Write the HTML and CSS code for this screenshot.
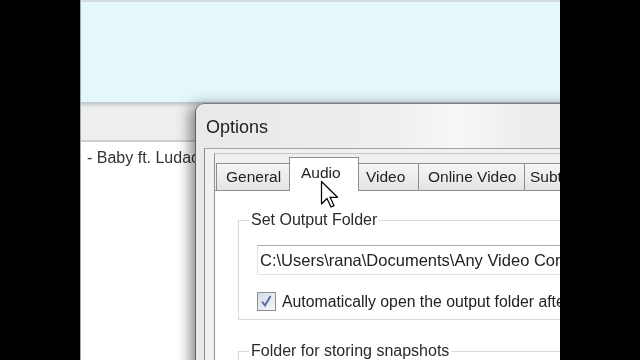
FILE: index.html
```html
<!DOCTYPE html>
<html>
<head>
<meta charset="utf-8">
<link rel="stylesheet" href="styles.css">
</head>
<body>
<div class="screen">
  <div class="bar"></div>
  <div class="app">
    <div class="sky"></div>
    <div class="toolbar"></div>
    <div class="list">
      <div class="row">- Baby ft. Ludacris</div>
    </div>

    <div class="dialog">
      <div class="title">Options</div>
      <div class="client">
        <div class="tabctl">
          <div class="tabs">
            <div class="tab t-general">General</div>
            <div class="tab t-audio active">Audio</div>
            <div class="tab t-video">Video</div>
            <div class="tab t-online">Online Video</div>
            <div class="tab t-sub">Subtitle</div>
          </div>
          <div class="panel">
            <fieldset class="group">
              <legend>Set Output Folder</legend>
              <div class="field"><span class="caret"></span>C:\Users\rana\Documents\Any Video Converter</div>
              <div class="check-row">
                <span class="checkbox">
                  <svg width="19" height="19" viewBox="0 0 19 19"><path d="M5 9.5 L8 13.5 L13.5 4" fill="none" stroke="#5a6ea6" stroke-width="2"/></svg>
                </span>
                <span class="check-label">Automatically open the output folder after conversion</span>
              </div>
            </fieldset>
            <fieldset class="group group2">
              <legend>Folder for storing snapshots</legend>
            </fieldset>
          </div>
        </div>
      </div>
    </div>

    <svg class="cursor" width="22" height="32" viewBox="0 0 22 32">
      <path d="M1.5 1.5 L1.5 24 L7 18.5 L11 27 L14 25.6 L10 17.3 L17.5 17.3 Z" fill="#fff" stroke="#000" stroke-width="1.2" stroke-linejoin="round"/>
    </svg>
  </div>
  <div class="bar"></div>
</div>
</body>
</html>
```

FILE: styles.css
```css
html, body {
  margin: 0;
  padding: 0;
  background: #000;
}
body {
  width: 640px;
  height: 360px;
  overflow: hidden;
  font-family: "Liberation Sans", Arial, sans-serif;
}
.screen {
  display: flex;
  width: 640px;
  height: 360px;
}
.bar {
  width: 80px;
  flex: none;
  background: #000;
}
.app {
  width: 479px;
  flex: none;
  height: 360px;
  position: relative;
  overflow: hidden;
  background: #fff;
  border-left: 1px solid #a5a8a9;
  filter: blur(0.55px);
}
.sky {
  height: 100px;
  background: #e4f8fc;
  border-top: 2px solid #d3dbdd;
}
.toolbar {
  height: 38px;
  background: linear-gradient(#b9c3c7 0, #dfe3e4 4px, #eeeeee 6px, #eeeeee 100%);
  border-bottom: 2px solid #cfcfcf;
}
.list {
  padding: 8px 0 0 6px;
}
.row {
  font-size: 16px;
  line-height: 16px;
  color: #333;
  white-space: nowrap;
}

/* dialog window */
.dialog {
  position: absolute;
  left: 114px;
  top: 103px;
  width: 420px;
  height: 280px;
  border-left: 1px solid #5f6163;
  border-top: 1px solid #7c7f80;
  border-top-left-radius: 9px;
  background: linear-gradient(90deg, #e9e9e9 0%, #eeeeee 45%, #f7f7f7 62%, #ededed 78%, #eaeaea 100%);
  box-shadow: -5px 2px 14px rgba(0, 0, 0, 0.45);
}
.title {
  box-sizing: border-box;
  height: 44px;
  padding: 14px 0 0 10px;
  font-size: 18px;
  line-height: 18px;
  color: #222;
}
.client {
  margin-left: 8px;
  height: 240px;
  border-top: 1px solid #a3a3a3;
  border-left: 1px solid #8d8d8d;
  background: #f0f0f0;
  padding-top: 4px;
}
.tabctl {
  margin-left: 9px;
  height: 236px;
  border-top: 1px solid #c9c9c9;
  border-left: 1px solid #8f9196;
  display: flex;
  flex-direction: column;
}
.tabs {
  display: flex;
  align-items: flex-end;
  height: 31px;
  margin-top: 5px;
  padding-left: 1px;
  position: relative;
  z-index: 1;
}
.tab {
  box-sizing: border-box;
  height: 27px;
  border: 1px solid #8c8e94;
  border-bottom: none;
  background: linear-gradient(#f5f5f5, #e4e4e4);
  font-size: 15.5px;
  line-height: 26px;
  color: #222;
  white-space: nowrap;
  margin-left: -1px;
}
.t-general { width: 74px; padding-left: 9px; margin-left: 0; }
.t-audio { width: 70px; padding-left: 11px; }
.t-video { width: 61px; padding-left: 7px; }
.t-online { width: 107px; padding-left: 9px; }
.t-sub { width: 80px; padding-left: 5px; }
.tab.active {
  height: 34px;
  margin-bottom: -1px;
  background: #fff;
  line-height: 30px;
  position: relative;
  z-index: 2;
}
.panel {
  flex: 1;
  background: #fff;
  border-top: 1px solid #8c8e94;
  padding: 20px 0 0 23px;
}
.group {
  margin: 0;
  padding: 16px 0 8px 10px;
  border: 1px solid #d5d9dc;
  border-right: none;
  min-width: 0;
}
.group legend {
  padding: 0 2px;
  font-size: 16px;
  line-height: 18px;
  color: #2a2a2a;
}
.field {
  margin-left: 8px;
  width: 340px;
  height: 30px;
  box-sizing: border-box;
  border: 1px solid #dde3ea;
  border-top-color: #abadb3;
  padding-left: 3px;
  font-size: 16.5px;
  line-height: 28px;
  color: #222;
  white-space: nowrap;
  display: flex;
  align-items: center;
}
.caret {
  display: inline-block;
  width: 1px;
  height: 17px;
  background: #000;
  margin-right: -1px;
}
.check-row {
  display: flex;
  align-items: center;
  gap: 6px;
  margin: 17px 0 0 8px;
  white-space: nowrap;
}
.checkbox {
  box-sizing: border-box;
  width: 19px;
  height: 19px;
  border: 1px solid #8e8f8f;
  background: linear-gradient(135deg, #d6deeb, #f3f6fa);
  display: flex;
  flex: none;
}
.checkbox svg {
  margin: -1px;
}
.check-label {
  font-size: 15.8px;
  line-height: 19px;
  color: #222;
}
.group2 {
  margin-top: 22px;
  height: 40px;
}
.cursor {
  position: absolute;
  left: 239px;
  top: 180px;
  z-index: 5;
}
```
